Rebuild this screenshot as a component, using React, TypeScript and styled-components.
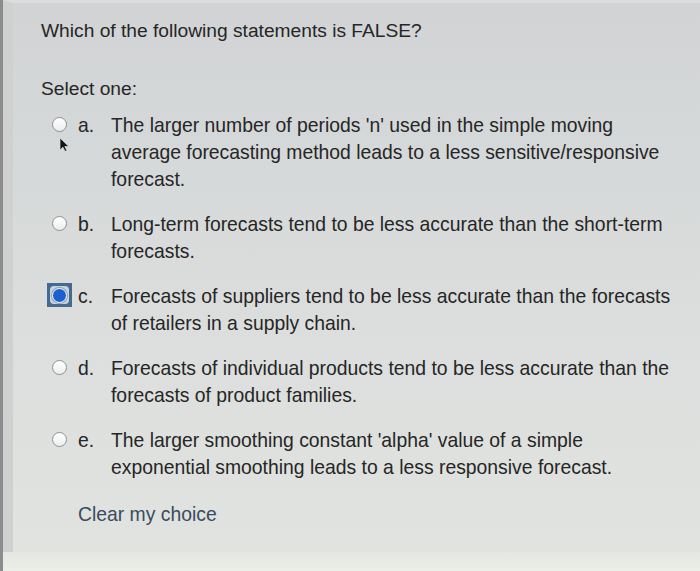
import React from "react";
import styled, { createGlobalStyle } from "styled-components";

const Global = createGlobalStyle`
  html, body { margin: 0; padding: 0; }
  body { width: 700px; height: 571px; overflow: hidden; background: #e6e9e4; }
  #root { width: 700px; height: 571px; }
`;

const Screen = styled.div`
  width: 700px;
  height: 571px;
  display: flex;
  flex-direction: column;
  border-left: 3px solid #8c8c8e;
  box-sizing: border-box;
  background: linear-gradient(180deg, #e4e6e3 0%, #e9ece6 100%);
  font-family: "Liberation Sans", Arial, Helvetica, sans-serif;
`;

const Panel = styled.div`
  height: 552px;
  box-sizing: border-box;
  border-left: 10px solid #cfd0d0;
  border-top: 3px solid #dcdcdd;
  background: linear-gradient(180deg, #d1d3d4 0%, #d6d9d9 30%, #dcdfdd 65%, #e0e3df 100%);
  padding: 14px 0 0 28px;
  display: flex;
  flex-direction: column;
`;

const Question = styled.div`
  font-size: 19.2px;
  color: #262626;
  line-height: 28px;
`;

const Prompt = styled.div`
  margin-top: 30px;
  font-size: 19.2px;
  color: #262626;
  line-height: 28px;
`;

const Options = styled.div`
  margin-top: 9px;
  display: flex;
  flex-direction: column;
  gap: 18px;
`;

const Option = styled.div`
  display: grid;
  grid-template-columns: 36px 34px 568px;
  align-items: start;
  font-size: 19.35px;
  line-height: 27px;
  color: #262626;
`;

const RadioCell = styled.div`
  height: 27px;
  display: flex;
  align-items: center;
  justify-content: center;
  position: relative;
`;

const Radio = styled.span<{ $checked?: boolean }>`
  width: 15px;
  height: 15px;
  margin-top: -3px;
  border-radius: 50%;
  box-sizing: border-box;
  border: 1px solid #8f9194;
  background: linear-gradient(180deg, #ffffff 0%, #eceeee 100%);
  display: flex;
  align-items: center;
  justify-content: center;
  ${(p) =>
    p.$checked &&
    `
    margin-top: 0;
    border: 1.5px solid #ffffff;
    background: #1e5fcf;
    box-shadow: 0 0 0 1px #8fa3b8;
  `}
`;

const Focus = styled.span`
  width: 25px;
  height: 24px;
  margin-top: -3px;
  background: #46698f;
  display: flex;
  align-items: center;
  justify-content: center;
`;

const FocusInner = styled.span`
  width: 19px;
  height: 18px;
  background: #c9d3dc;
  border-radius: 4px;
  display: flex;
  align-items: center;
  justify-content: center;
`;

const Letter = styled.span`
  padding-left: 1px;
`;

const Text = styled.span`
  color: #262626;
`;

const Cursor = styled.svg`
  position: absolute;
  left: 18px;
  top: 25px;
`;

const Clear = styled.div`
  margin-top: 20px;
  margin-left: 37px;
  font-size: 19.35px;
  line-height: 27px;
  color: #3a4b5e;
`;

const Bottom = styled.div`
  flex: 1;
  background: linear-gradient(180deg, #e3e7e2 0%, #eceee8 100%);
`;

const options = [
  {
    l: "a.",
    t: "The larger number of periods 'n' used in the simple moving average forecasting method leads to a less sensitive/responsive forecast.",
  },
  { l: "b.", t: "Long-term forecasts tend to be less accurate than the short-term forecasts." },
  {
    l: "c.",
    t: "Forecasts of suppliers tend to be less accurate than the forecasts of retailers in a supply chain.",
    checked: true,
  },
  {
    l: "d.",
    t: "Forecasts of individual products tend to be less accurate than the forecasts of product families.",
  },
  {
    l: "e.",
    t: "The larger smoothing constant 'alpha' value of a simple exponential smoothing leads to a less responsive forecast.",
  },
];

export default function App() {
  return (
    <>
      <Global />
      <Screen>
        <Panel>
          <Question>Which of the following statements is FALSE?</Question>
          <Prompt>Select one:</Prompt>
          <Options>
            {options.map((o, i) => (
              <Option key={o.l}>
                <RadioCell>
                  {o.checked ? (
                    <Focus>
                      <FocusInner>
                        <Radio $checked />
                      </FocusInner>
                    </Focus>
                  ) : (
                    <Radio />
                  )}
                  {i === 0 && (
                    <Cursor width="11" height="15" viewBox="0 0 11 15">
                      <path d="M1 1 L1 13 L3.9 10.2 L6.1 14.3 L7.9 13.5 L5.8 9.5 L9.8 9.5 Z" fill="#141414" stroke="#dcdcdc" strokeWidth="0.7" />
                    </Cursor>
                  )}
                </RadioCell>
                <Letter>{o.l}</Letter>
                <Text>{o.t}</Text>
              </Option>
            ))}
          </Options>
          <Clear>Clear my choice</Clear>
        </Panel>
        <Bottom />
      </Screen>
    </>
  );
}
